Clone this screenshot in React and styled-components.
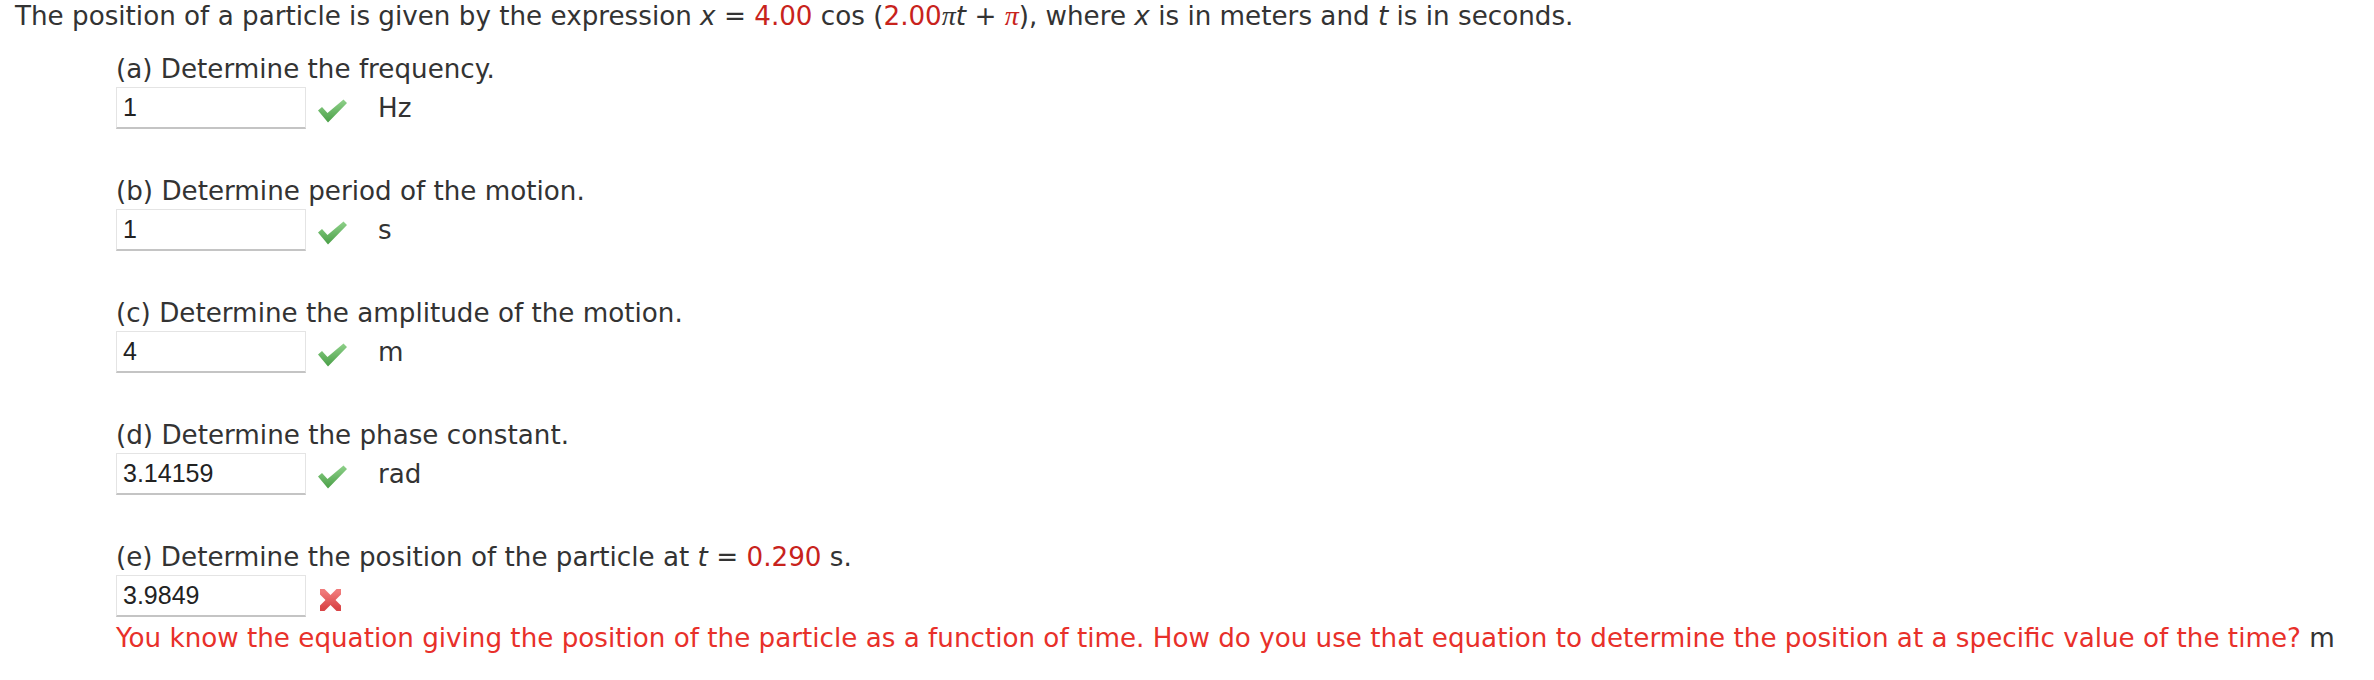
import React from 'react';
import styled, { createGlobalStyle } from 'styled-components';

const GlobalStyle = createGlobalStyle`
  html, body {
    margin: 0;
    padding: 0;
    background: #ffffff;
  }
  body {
    font-family: "DejaVu Sans", Verdana, sans-serif;
    color: #333333;
  }
`;

const Page = styled.div`
  padding: 1px 0 0 15px;
  font-size: 26.2px;
  line-height: 29px;
`;

const Question = styled.div`
  white-space: nowrap;
`;

const Var = styled.i`
  font-style: italic;
`;

const Given = styled.span`
  color: #c8231c;
`;

const Pi = styled.span`
  font-family: "Liberation Serif", "Times New Roman", serif;
  font-style: italic;
  font-size: 28px;
`;

const Parts = styled.div`
  display: flex;
  flex-direction: column;
  gap: 48px;
  margin: 24px 0 0 101px;
`;

const Part = styled.div`
  display: flex;
  flex-direction: column;
`;

const Prompt = styled.div`
  white-space: nowrap;
`;

const AnswerRow = styled.div`
  display: flex;
  align-items: center;
  margin-top: 3px;
  height: 42px;
`;

const AnswerBox = styled.div`
  box-sizing: border-box;
  width: 190px;
  height: 42px;
  padding: 0 6px;
  display: flex;
  align-items: center;
  border: 1px solid #e4e4e4;
  border-bottom: 2px solid #c4c4c4;
  background: #ffffff;
  font-family: "Liberation Sans", Arial, sans-serif;
  font-size: 25px;
  color: #222222;
`;

const Mark = styled.span`
  display: flex;
  margin: ${(p) => (p.$wrong ? '8px 0 0 11px' : '6px 0 0 11px')};
  width: 31px;
`;

const Unit = styled.span`
  margin-left: 30px;
`;

const Hint = styled.div`
  margin-top: 7px;
  white-space: nowrap;
  color: #e8302a;
`;

const HintUnit = styled.span`
  color: #333333;
`;

function CheckIcon() {
  return (
    <svg width="31" height="26" viewBox="0 0 31 26">
      <defs>
        <linearGradient id="chk" x1="0" y1="0" x2="0" y2="1">
          <stop offset="0" stopColor="#8fd18a" />
          <stop offset="1" stopColor="#4a9f47" />
        </linearGradient>
        <filter id="chkBlur">
          <feGaussianBlur stdDeviation="0.6" />
        </filter>
      </defs>
      <path
        d="M1 12.5 L5 9 L10.5 15 L26.5 1.5 L30 5 L11 24.5 Z"
        fill="url(#chk)"
        filter="url(#chkBlur)"
      />
    </svg>
  );
}

function CrossIcon() {
  return (
    <svg width="27" height="28" viewBox="0 0 27 28">
      <defs>
        <linearGradient id="crs" x1="0" y1="0" x2="0" y2="1">
          <stop offset="0" stopColor="#f07a7a" />
          <stop offset="1" stopColor="#d94446" />
        </linearGradient>
        <filter id="crsBlur">
          <feGaussianBlur stdDeviation="0.7" />
        </filter>
      </defs>
      <g stroke="url(#crs)" strokeWidth="7" strokeLinecap="round" filter="url(#crsBlur)">
        <line x1="5" y1="5.5" x2="22" y2="22.5" />
        <line x1="22" y1="5.5" x2="5" y2="22.5" />
      </g>
    </svg>
  );
}

const parts = [
  { label: '(a) Determine the frequency.', value: '1', unit: 'Hz' },
  { label: '(b) Determine period of the motion.', value: '1', unit: 's' },
  { label: '(c) Determine the amplitude of the motion.', value: '4', unit: 'm' },
  { label: '(d) Determine the phase constant.', value: '3.14159', unit: 'rad' },
];

export default function App() {
  return (
    <Page>
      <GlobalStyle />
      <Question>
        The position of a particle is given by the expression <Var>x</Var> ={' '}
        <Given>4.00</Given> cos (<Given>2.00</Given>
        <Pi>π</Pi>
        <Var>t</Var> + <Given><Pi>π</Pi></Given>), where <Var>x</Var> is in meters and{' '}
        <Var>t</Var> is in seconds.
      </Question>
      <Parts>
        {parts.map((p) => (
          <Part key={p.label}>
            <Prompt>{p.label}</Prompt>
            <AnswerRow>
              <AnswerBox>{p.value}</AnswerBox>
              <Mark>
                <CheckIcon />
              </Mark>
              <Unit>{p.unit}</Unit>
            </AnswerRow>
          </Part>
        ))}
        <Part>
          <Prompt>
            (e) Determine the position of the particle at <Var>t</Var> ={' '}
            <Given>0.290</Given> s.
          </Prompt>
          <AnswerRow>
            <AnswerBox>3.9849</AnswerBox>
            <Mark $wrong>
              <CrossIcon />
            </Mark>
          </AnswerRow>
          <Hint>
            You know the equation giving the position of the particle as a function of
            time. How do you use that equation to determine the position at a specific
            value of the time? <HintUnit>m</HintUnit>
          </Hint>
        </Part>
      </Parts>
    </Page>
  );
}
